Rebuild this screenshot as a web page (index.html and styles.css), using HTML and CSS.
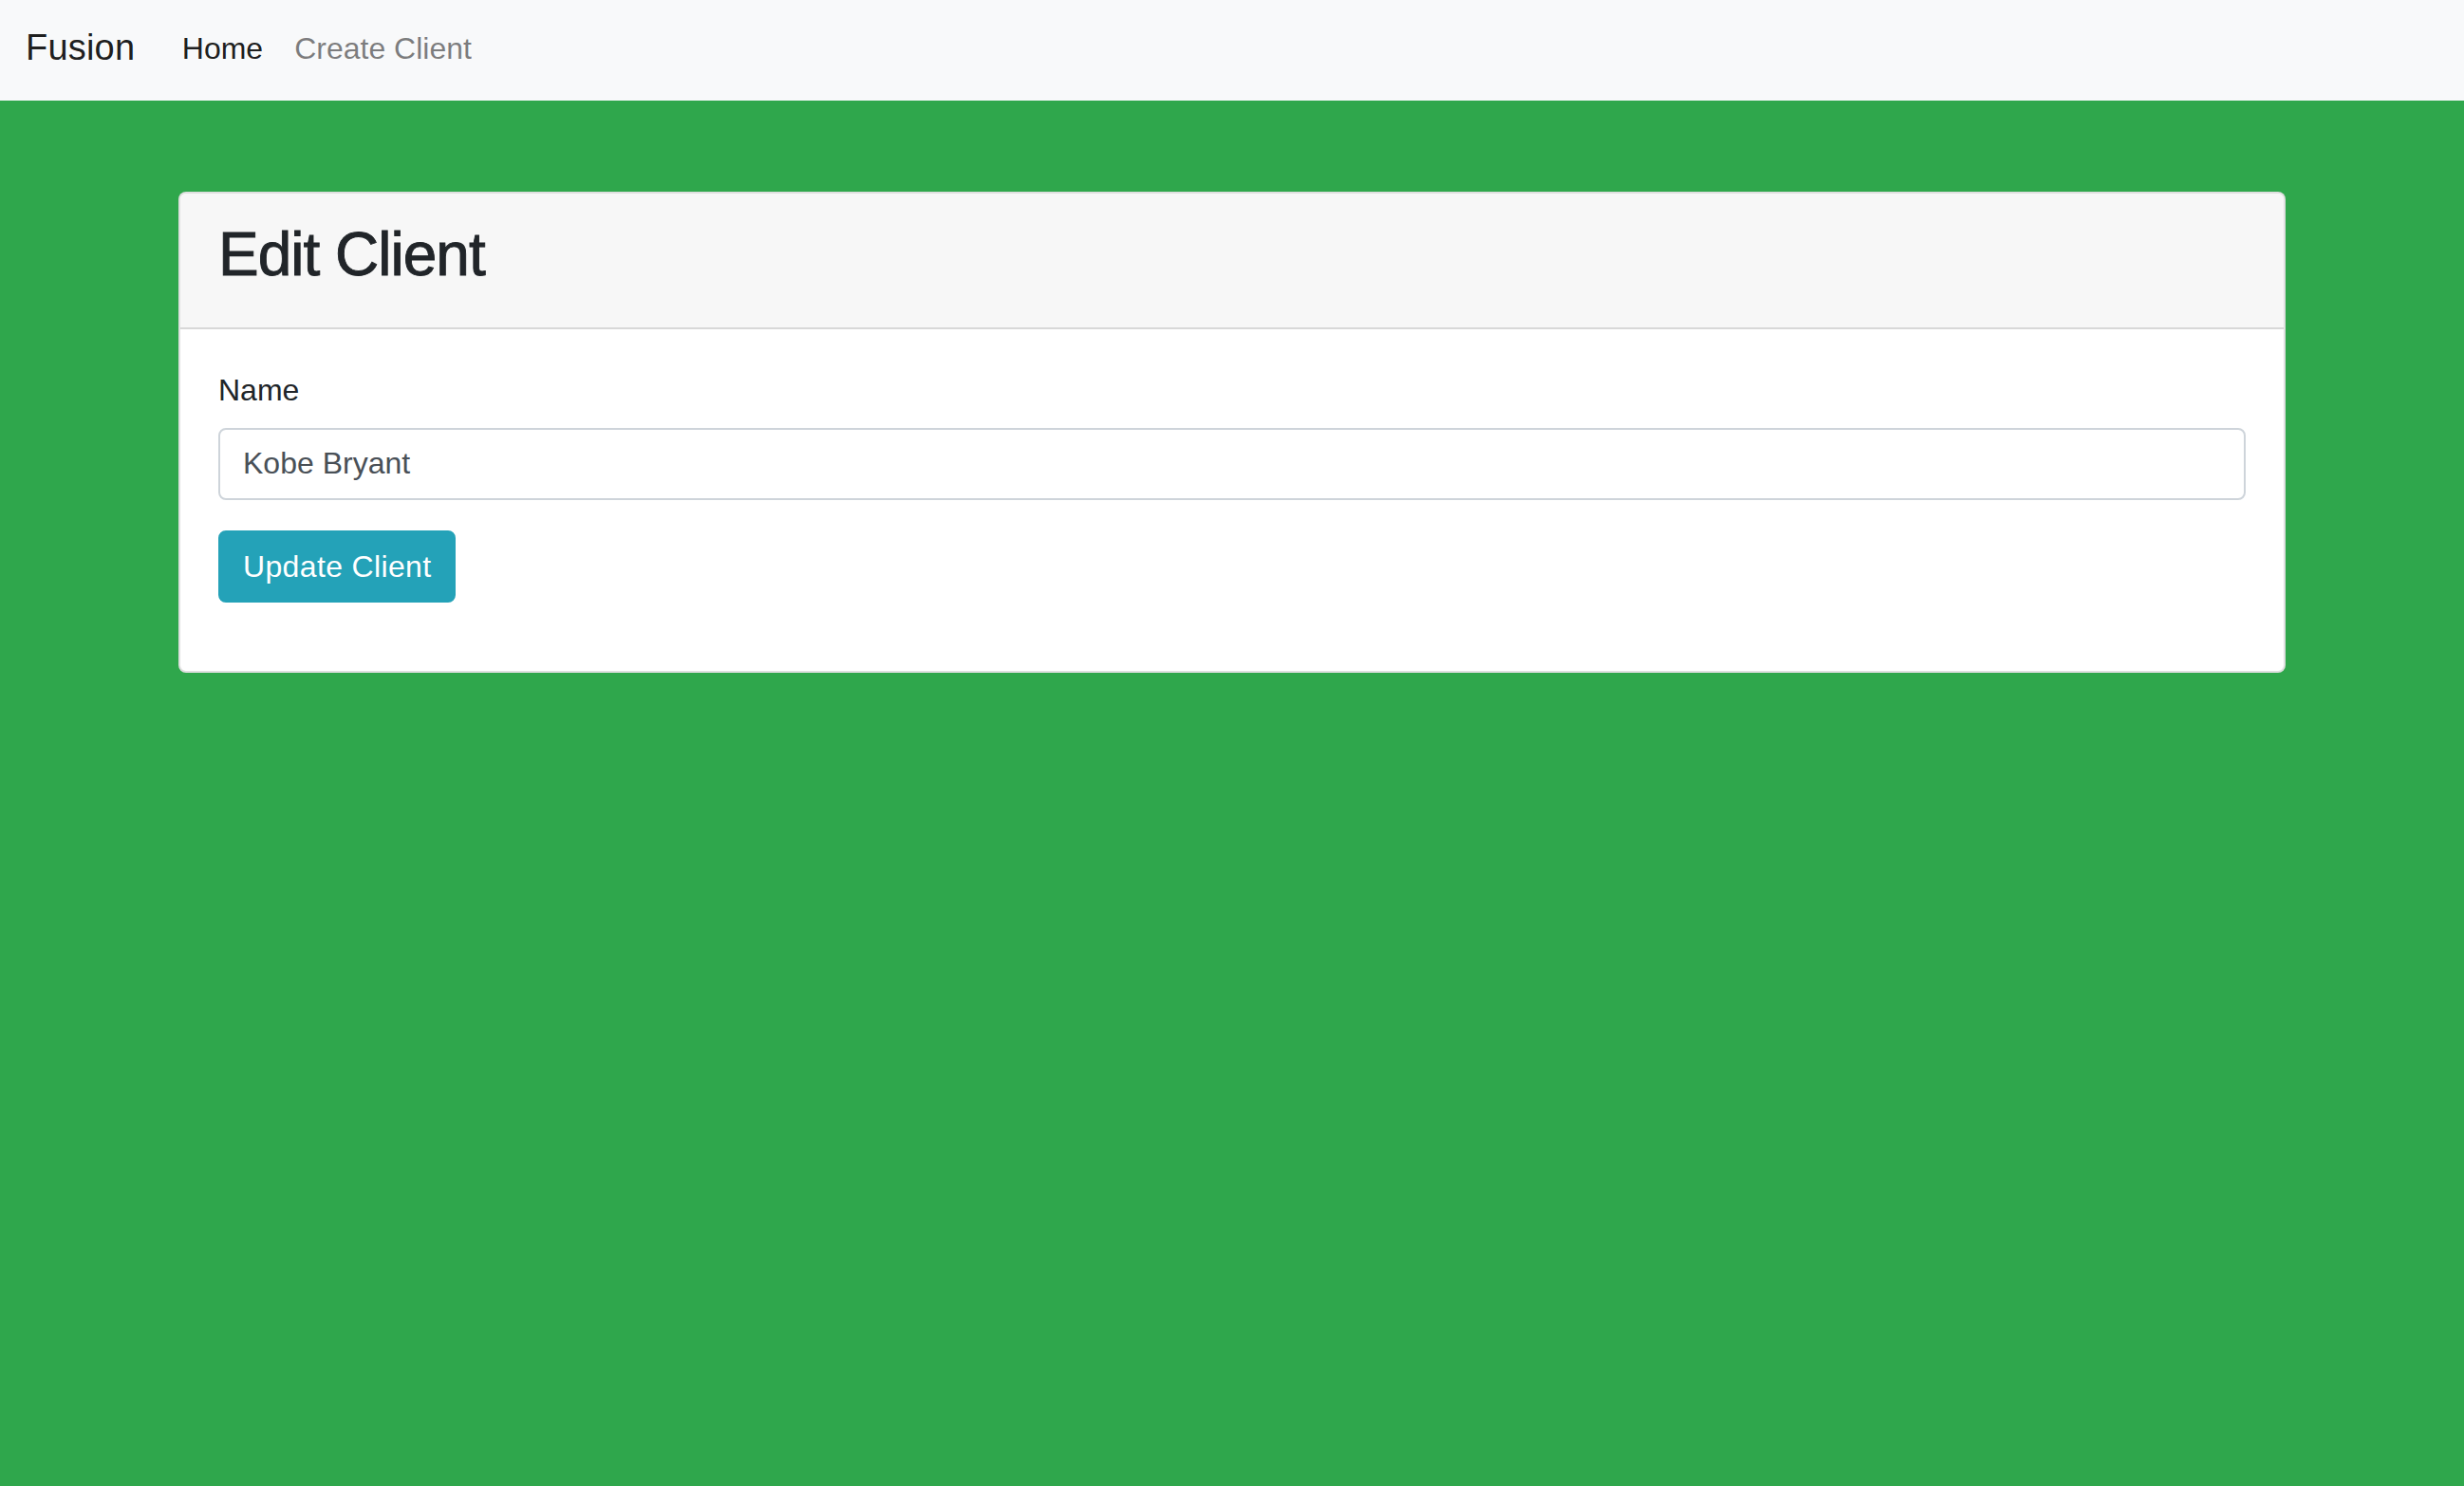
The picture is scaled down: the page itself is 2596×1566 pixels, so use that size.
FILE: index.html
```html
<!DOCTYPE html>
<html lang="en">
<head>
<meta charset="utf-8">
<title>Fusion</title>
<link rel="stylesheet" href="styles.css">
</head>
<body>
  <nav class="navbar">
    <a class="brand" href="#">Fusion</a>
    <ul class="nav">
      <li><a class="nav-link active" href="#">Home</a></li>
      <li><a class="nav-link" href="#">Create Client</a></li>
    </ul>
  </nav>
  <main class="container">
    <section class="card">
      <header class="card-header">
        <h2 class="card-title">Edit Client</h2>
      </header>
      <div class="card-body">
        <form class="form">
          <div class="form-group">
            <label class="label" for="name">Name</label>
            <input class="input" id="name" type="text" value="Kobe Bryant">
          </div>
          <div class="form-group">
            <button class="btn" type="button">Update Client</button>
          </div>
        </form>
      </div>
    </section>
  </main>
</body>
</html>
```

FILE: styles.css
```css
* {
  box-sizing: border-box;
}

html, body {
  margin: 0;
  padding: 0;
}

body {
  min-height: 100vh;
  background: #2fa74c;
  font-family: "Liberation Sans", Arial, sans-serif;
  color: #212529;
}

.navbar {
  display: flex;
  align-items: center;
  height: 106px;
  padding: 0 27px 5px 27px;
  background: #f8f9fa;
}

.brand {
  font-size: 38px;
  line-height: 57px;
  letter-spacing: 0.2px;
  color: rgba(0, 0, 0, 0.9);
  text-decoration: none;
  margin-right: 33px;
}

.nav {
  display: flex;
  list-style: none;
  margin: 0;
  padding: 0;
}

.nav-link {
  display: block;
  padding: 0 16.5px;
  font-size: 32px;
  line-height: 48px;
  color: rgba(0, 0, 0, 0.5);
  text-decoration: none;
}

.nav-link.active {
  color: rgba(0, 0, 0, 0.9);
}

.container {
  width: 2220px;
  margin: 96px auto 0;
}

.card {
  background: #fff;
  border: 2px solid rgba(0, 0, 0, 0.125);
  border-radius: 8px;
  overflow: hidden;
}

.card-header {
  background: #f7f7f7;
  padding: 24px 40px;
  border-bottom: 2px solid rgba(0, 0, 0, 0.125);
}

.card-title {
  margin: 0 0 16px;
  font-size: 64px;
  line-height: 1.2;
  font-weight: 500;
  letter-spacing: -1px;
  -webkit-text-stroke: 0.9px #212529;
  color: #212529;
  padding-top: 2px;
  height: 76.8px;
}

.card-body {
  padding: 40px;
}

.form {
  margin: 0;
}

.form-group {
  display: flex;
  flex-direction: column;
  align-items: flex-start;
  margin-bottom: 32px;
}

.label {
  font-size: 32px;
  line-height: 48px;
  margin-bottom: 16px;
  color: #212529;
}

.input {
  width: 100%;
  height: 76px;
  padding: 12px 24px;
  font-family: "Liberation Sans", Arial, sans-serif;
  font-size: 32px;
  line-height: 48px;
  color: #495057;
  background: #fff;
  border: 2px solid #ced4da;
  border-radius: 8px;
  outline: none;
}

.btn {
  height: 76px;
  padding: 12px 24px;
  font-family: "Liberation Sans", Arial, sans-serif;
  font-size: 32px;
  line-height: 48px;
  letter-spacing: 0.35px;
  color: #fff;
  background: #24a2b8;
  border: 2px solid #24a2b8;
  border-radius: 8px;
  cursor: pointer;
}
```
